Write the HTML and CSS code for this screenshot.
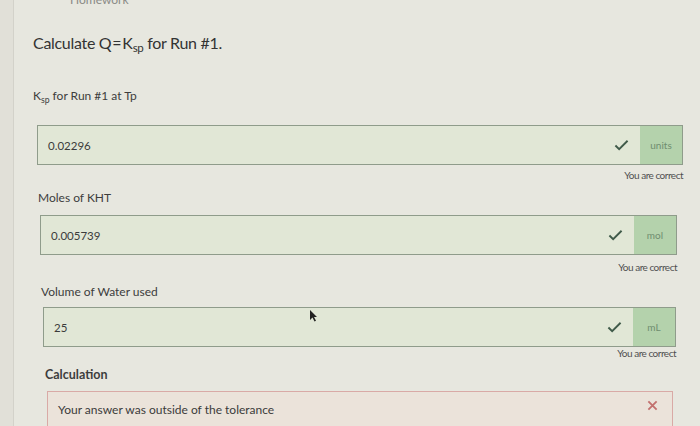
FILE: index.html
```html
<!DOCTYPE html>
<html>
<head>
<meta charset="utf-8">
<link rel="stylesheet" href="styles.css">
</head>
<body>
<div class="page">
  <div class="strip"></div>
  <div class="main">
    <div class="top">Homework</div>
    <h1 class="title">Calculate Q<span class="eq">=</span>K<sub>sp</sub> for Run #1.</h1>
    <div class="label lab1">K<sub>sp</sub> for Run #1 at Tp</div>

    <div class="field f1">
      <div class="box">
        <span class="val">0.02296</span>
        <svg class="check" viewBox="0 0 16 12" width="15" height="12"><path d="M1.5 6.5 L5.5 10.5 L14.5 1.5" fill="none" stroke="#3f5a49" stroke-width="2"/></svg>
        <span class="unit">units</span>
      </div>
      <div class="ok">You are correct</div>
    </div>

    <div class="label lab2">Moles of KHT</div>
    <div class="field f2">
      <div class="box">
        <span class="val">0.005739</span>
        <svg class="check" viewBox="0 0 16 12" width="15" height="12"><path d="M1.5 6.5 L5.5 10.5 L14.5 1.5" fill="none" stroke="#3f5a49" stroke-width="2"/></svg>
        <span class="unit">mol</span>
      </div>
      <div class="ok">You are correct</div>
    </div>

    <div class="label lab3">Volume of Water used</div>
    <div class="field f3">
      <div class="box">
        <span class="val">25</span>
        <svg class="check" viewBox="0 0 16 12" width="15" height="12"><path d="M1.5 6.5 L5.5 10.5 L14.5 1.5" fill="none" stroke="#3f5a49" stroke-width="2"/></svg>
        <span class="unit">mL</span>
      </div>
      <div class="ok">You are correct</div>
      <svg class="cursor" viewBox="0 0 8 12" width="8" height="12"><path d="M1 0 L1 10 L3.5 7.5 L5.5 11.5 L7 10.8 L5 7 L8 7 Z" fill="#222"/></svg>
    </div>

    <div class="label bold lab4">Calculation</div>
    <div class="err">
      <span class="errtxt">Your answer was outside of the tolerance</span>
      <svg class="x" viewBox="0 0 12 12" width="11" height="11"><path d="M1.5 1.5 L10.5 10.5 M10.5 1.5 L1.5 10.5" stroke="#c2706e" stroke-width="2" fill="none"/></svg>
    </div>
  </div>
</div>
</body>
</html>
```
FILE: styles.css
```css
html, body {
  margin: 0;
  padding: 0;
  background: #e7e7df;
  font-family: "Lato", "Open Sans", sans-serif;
  color: #3a3a3a;
  overflow: hidden;
}
.page {
  display: flex;
  width: 700px;
  height: 426px;
}
.strip {
  width: 13px;
  flex: none;
  background: #e1e0d8;
  border-right: 1px solid #d3d2ca;
}
.main {
  flex: 1;
  display: flex;
  flex-direction: column;
  position: relative;
}
.top {
  font-size: 12px;
  color: #8a8a86;
  margin: -8px 0 0 56px;
  height: 12px;
}
.title {
  font-size: 16px;
  font-weight: 400;
  margin: 29px 0 0 19px;
  color: #333;
  letter-spacing: -0.3px;
}
.eq {
  margin: 0 1px;
}
sub {
  font-size: 72%;
  vertical-align: -3px;
  line-height: 0;
}
.label {
  font-size: 12px;
  color: #3d3d3d;
}
.lab1 { margin: 36px 0 0 19px; }
.lab2 { margin: 9px 0 0 24px; }
.lab3 { margin: 11px 0 0 27px; }
.lab4 { margin: 8px 0 0 31px; font-size: 12.5px; }
.bold { font-weight: 700; }
.field {
  display: flex;
  flex-direction: column;
  position: relative;
}
.f1 { margin: 22px 0 0 23px; width: 646px; }
.f2 { margin: 10px 0 0 26px; width: 637px; }
.f3 { margin: 8px 0 0 29px; width: 633px; }
.box {
  display: flex;
  align-items: center;
  height: 40px;
  border: 1px solid #8f9c8b;
  background: #e1e7d6;
  box-sizing: border-box;
}
.val {
  flex: 1;
  font-size: 11.5px;
  color: #3b3b3b;
  padding-left: 10px;
}
.check {
  margin-right: 11px;
}
.unit {
  width: 42px;
  align-self: stretch;
  display: flex;
  align-items: center;
  justify-content: center;
  background: #b4d2ac;
  color: #6f8d6f;
  font-size: 10px;
}
.ok {
  align-self: flex-end;
  font-size: 10px;
  color: #505050;
  margin-top: 4px;
  letter-spacing: -0.5px;
}
.f2 .ok { margin-top: 6px; }
.f3 .ok { margin-top: 0; }
.cursor {
  position: absolute;
  left: 266px;
  top: 3px;
}
.err {
  margin: 9px 0 0 33px;
  width: 626px;
  height: 46px;
  border: 1px solid #d9aaa6;
  border-bottom: none;
  background: #ebe3da;
  box-sizing: border-box;
  display: flex;
  align-items: center;
}
.errtxt {
  flex: 1;
  font-size: 12px;
  color: #3b3b3b;
  padding-left: 10px;
}
.x {
  margin-right: 14px;
  margin-top: -8px;
}
```
